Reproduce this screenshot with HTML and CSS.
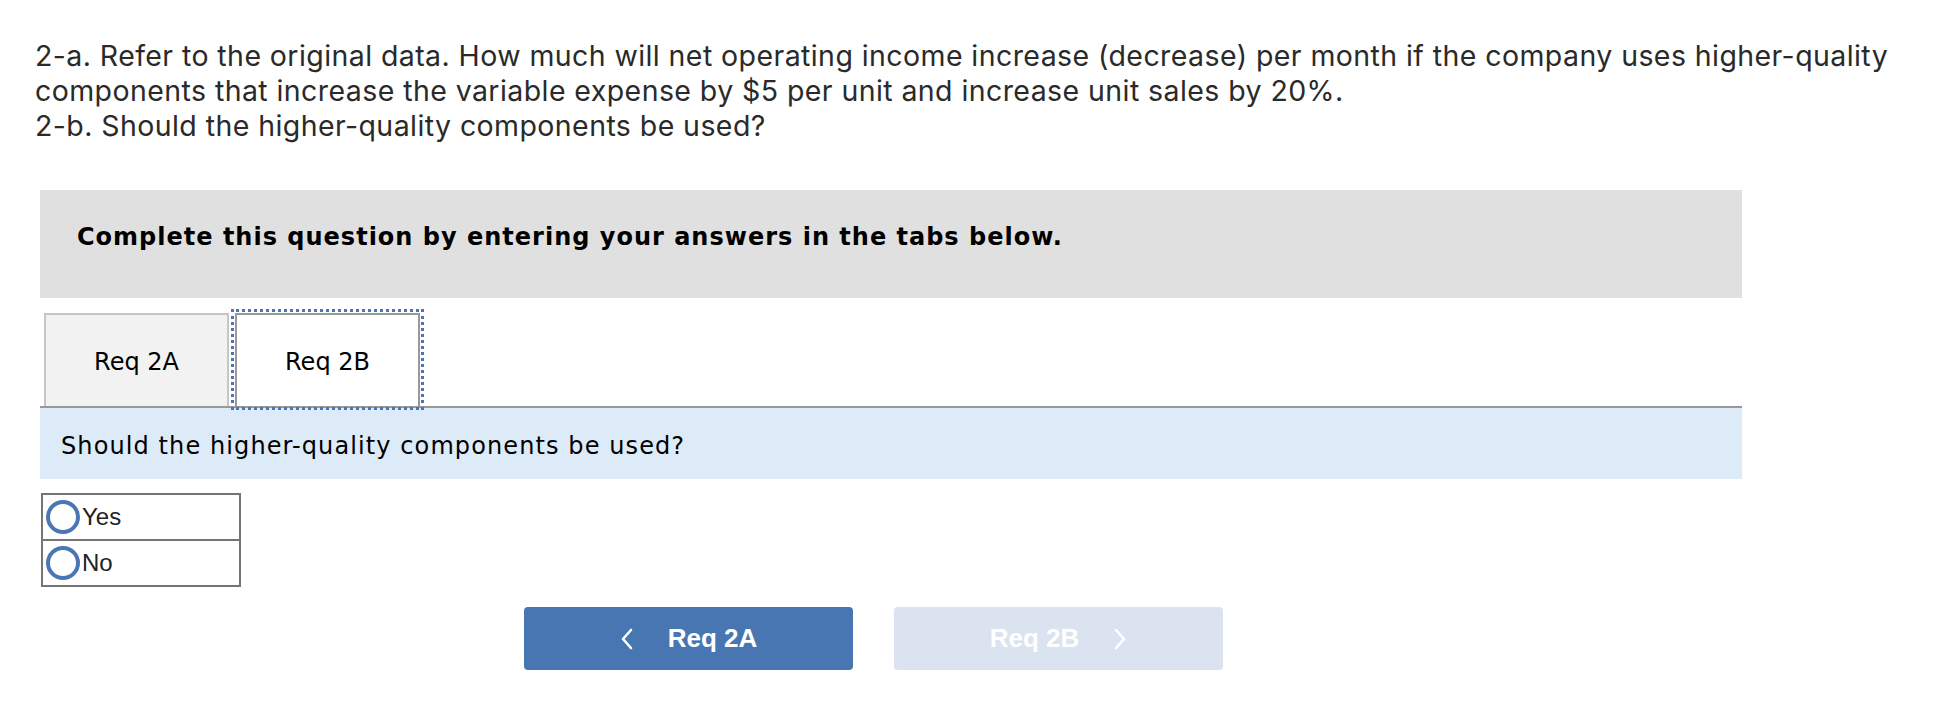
FILE: index.html
```html
<!DOCTYPE html>
<html>
<head>
<meta charset="utf-8">
<link rel="stylesheet" href="styles.css">
</head>
<body>
<div class="page">
  <div class="question">
    <p>2-a. Refer to the original data. How much will net operating income increase (decrease) per month if the company uses higher-quality components that increase the variable expense by $5 per unit and increase unit sales by 20%.</p>
    <p>2-b. Should the higher-quality components be used?</p>
  </div>

  <div class="panel">
    <div class="instructions">Complete this question by entering your answers in the tabs below.</div>
    <div class="tabs">
      <div class="tab">Req 2A</div>
      <div class="tab active">Req 2B</div>
    </div>
    <div class="prompt">Should the higher-quality components be used?</div>
  </div>

  <div class="choices">
    <div class="choice"><span class="radio"></span><span class="label">Yes</span></div>
    <div class="choice"><span class="radio"></span><span class="label">No</span></div>
  </div>

  <div class="nav">
    <div class="btn prev">
      <svg class="chev" width="14" height="22" viewBox="0 0 14 22"><polyline points="11,2 3,11 11,20" fill="none" stroke="#fff" stroke-width="2.6" stroke-linecap="round" stroke-linejoin="round"/></svg>
      <span>Req 2A</span>
    </div>
    <div class="btn next">
      <span>Req 2B</span>
      <svg class="chev" width="14" height="22" viewBox="0 0 14 22"><polyline points="3,2 11,11 3,20" fill="none" stroke="#fff" stroke-width="2.6" stroke-linecap="round" stroke-linejoin="round"/></svg>
    </div>
  </div>
</div>
</body>
</html>
```

FILE: styles.css
```css
html, body {
  margin: 0;
  padding: 0;
  background: #fff;
}

.page {
  padding: 38px 0 0 35px;
}

.question {
  width: 1900px;
  font-family: "Inter", "Open Sans", sans-serif;
  font-size: 28.5px;
  letter-spacing: 0.42px;
  line-height: 35px;
  color: #2a2a2a;
}

.question p {
  margin: 0;
}

.panel {
  margin: 47px 0 0 5px;
  width: 1702px;
}

.instructions {
  background: #e0e0e0;
  height: 108px;
  box-sizing: border-box;
  padding: 34px 0 0 37px;
  font-family: "DejaVu Sans", Verdana, sans-serif;
  font-weight: bold;
  font-size: 24px;
  letter-spacing: 1px;
  line-height: 26px;
  color: #000;
}

.tabs {
  display: flex;
  margin-top: 15px;
  padding-left: 4px;
  border-bottom: 2px solid #999;
}

.tab {
  width: 185px;
  height: 93px;
  box-sizing: border-box;
  display: flex;
  align-items: center;
  justify-content: center;
  background: #f2f2f2;
  border: 2px solid #c6c6c6;
  border-bottom: none;
  font-family: "DejaVu Sans", Verdana, sans-serif;
  font-size: 24px;
  color: #000;
  padding-top: 2px;
}

.tab.active {
  background: #fff;
  border-color: #999;
  margin-left: 6px;
  outline: 3px dotted #4a77b4;
  outline-offset: 1px;
}

.prompt {
  background: #ddeaf7;
  height: 71px;
  box-sizing: border-box;
  padding: 24px 0 0 21px;
  font-family: "DejaVu Sans", Verdana, sans-serif;
  font-size: 24px;
  letter-spacing: 1.1px;
  line-height: 28px;
  color: #000;
}

.choices {
  margin: 14px 0 0 6px;
  width: 200px;
  box-sizing: border-box;
  border: 2px solid #757575;
}

.choice {
  height: 44px;
  display: flex;
  align-items: center;
  padding-left: 3px;
}

.choice + .choice {
  border-top: 2px solid #757575;
}

.radio {
  width: 34px;
  height: 34px;
  box-sizing: border-box;
  border: 4px solid #4a77b4;
  border-radius: 50%;
}

.label {
  margin-left: 2px;
  font-family: "Liberation Sans", Arial, sans-serif;
  font-size: 24px;
  color: #222;
}

.nav {
  display: flex;
  gap: 41px;
  margin-top: 20px;
  padding-left: 489px;
}

.btn {
  width: 329px;
  height: 63px;
  border-radius: 4px;
  display: flex;
  align-items: center;
  justify-content: center;
  gap: 34px;
  font-family: "Liberation Sans", Arial, sans-serif;
  font-weight: bold;
  font-size: 26px;
  color: #fff;
}

.btn.prev {
  background: #4876b3;
}

.btn.next {
  background: #dae3ef;
}

.chev {
  display: block;
}
```
